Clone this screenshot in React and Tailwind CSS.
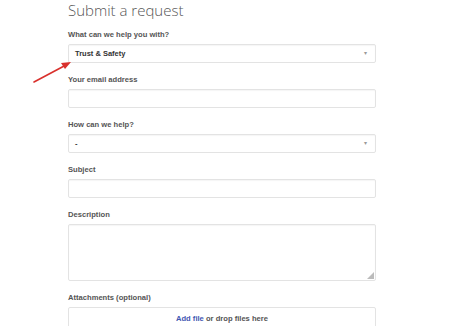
import React from "react";

const labelCls =
  "block h-[12px] leading-[12px] text-[7.6px] font-bold text-[#555] mb-[3px]";
const boxCls =
  "w-full h-[19px] border border-[#e3e3e3] rounded-[2px] bg-white shadow-[inset_0_1px_1px_rgba(0,0,0,0.04)]";

const Field = ({ label, children }) => (
  <div className="mb-[11px]">
    <div className={labelCls}>{label}</div>
    {children}
  </div>
);

const SelectBox = ({ value }) => (
  <div className={`${boxCls} flex items-center justify-between px-[6px]`}>
    <span className="text-[7.5px] font-bold text-[#333]">{value}</span>
    <span className="text-[6px] text-[#999] pr-[2px]">▾</span>
  </div>
);

const App = () => {
  return (
    <div
      className="relative w-[474px] h-[326px] overflow-hidden bg-white"
      style={{ fontFamily: '"Liberation Sans", Arial, sans-serif' }}
    >
      <div className="ml-[68px] w-[308px]">
        <h1
          className="h-[29px] leading-[20px] text-[15px] font-light text-[#555]"
          style={{ fontFamily: '"Open Sans", sans-serif' }}
        >
          Submit a request
        </h1>

        <Field label="What can we help you with?">
          <SelectBox value="Trust & Safety" />
        </Field>

        <Field label="Your email address">
          <div className={boxCls} />
        </Field>

        <Field label="How can we help?">
          <SelectBox value="-" />
        </Field>

        <Field label="Subject">
          <div className={boxCls} />
        </Field>

        <Field label="Description">
          <div className={`${boxCls} h-[57px] relative`}>
            <svg
              className="absolute right-[1px] bottom-[1px]"
              width="7"
              height="7"
              viewBox="0 0 7 7"
            >
              <polygon points="7,0 7,7 0,7" fill="#bbb" />
            </svg>
          </div>
        </Field>

        <div className={labelCls}>Attachments (optional)</div>
        <div className="w-full h-[30px] border border-[#e3e3e3] rounded-[2px] pt-[5px] text-center text-[7.6px] font-bold text-[#555]">
          <span className="text-[#4257b2]">Add file</span> or drop files here
        </div>
      </div>

      {/* red pointer arrow */}
      <svg
        className="absolute left-[30px] top-[58px]"
        width="44"
        height="28"
        viewBox="0 0 44 28"
      >
        <line
          x1="4"
          y1="24"
          x2="36"
          y2="7"
          stroke="#d9302c"
          strokeWidth="1.6"
          strokeLinecap="round"
        />
        <polygon points="41,4 31,5 35,11" fill="#d9302c" />
      </svg>
    </div>
  );
};

export default App;
